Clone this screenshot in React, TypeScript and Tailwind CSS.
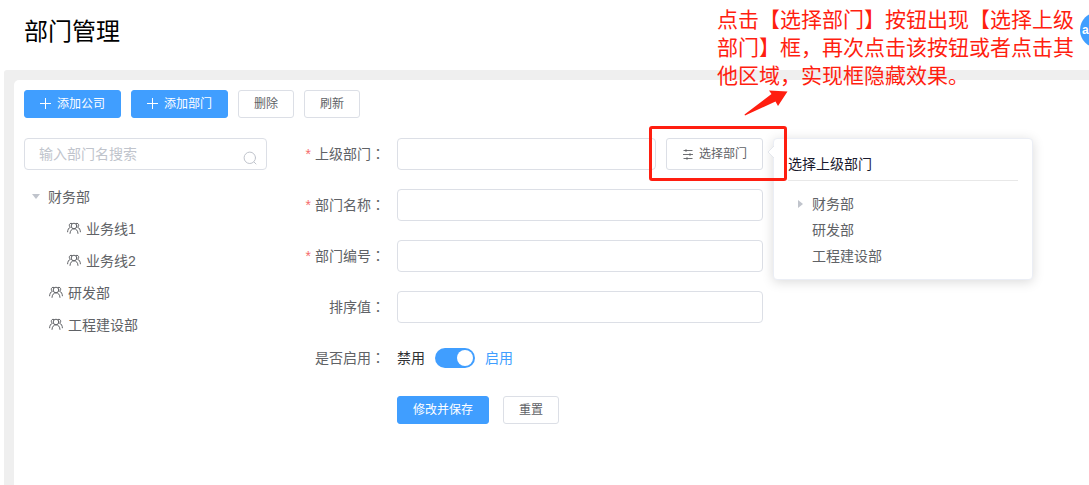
import { useEffect, useRef, useState } from "react";
import type { ButtonHTMLAttributes, ReactNode } from "react";

const groups = [
  { name: "财务部", children: ["业务线1", "业务线2"] },
  { name: "研发部", children: [] },
  { name: "工程建设部", children: [] },
];

const fields = [
  { id: "name", label: "部门名称", required: true },
  { id: "code", label: "部门编号", required: true },
  { id: "sort", label: "排序值", required: false },
];

const inputClass =
  "h-8 w-full min-w-0 rounded border border-[#dcdfe6] bg-white px-[14px] text-sm text-[#606266] outline-none placeholder:text-[#c0c4cc] focus:border-[#409eff]";

function PlusIcon() {
  return (
    <svg width="12" height="12" viewBox="0 0 12 12" fill="none" stroke="currentColor">
      <path d="M5.5 0v11M0 5.5h11" />
    </svg>
  );
}

function SearchIcon() {
  return (
    <svg width="14" height="14" viewBox="0 0 14 14" fill="none" stroke="currentColor" strokeLinecap="round">
      <circle cx="6.8" cy="6.8" r="5.7" />
      <path d="M11 11l2 2" />
    </svg>
  );
}

function OperationIcon() {
  return (
    <svg width="12" height="12" viewBox="0 0 12 12" fill="none" stroke="currentColor">
      <path d="M1.5 2.5h9M1 6.5h10M1.5 10.5h9" strokeWidth="0.9" />
      <path d="M4 1.5v2M8 5.5v2M5 9.5v2" strokeWidth="1.5" />
    </svg>
  );
}

function PeopleIcon() {
  return (
    <svg className="mb-[2px]" width="14" height="12" viewBox="0 0 14 12" fill="none" stroke="currentColor" strokeLinecap="round">
      <circle cx="7" cy="4" r="2.8" />
      <path d="M3 11.4c.1-2.7 1.7-4.6 4-4.6s3.9 1.9 4 4.6" />
      <path d="M4.8 1.4C3.3.9 2.300 1.900 2.300 3.300c0 1 .4 1.600 1.100 2C1.600 6 .7 7.500.6 9.800" />
      <path d="M9.200 1.400c1.500-.5 2.500.5 2.500 1.900 0 1-.4 1.600-1.100 2 1.800.7 2.700 2.200 2.800 4.500" />
    </svg>
  );
}

function Caret({ open }: { open: boolean }) {
  return (
    <svg width="12" height="12" viewBox="0 0 12 12" fill="#c0c4cc">
      <path d={open ? "M2 3h8L6 8z" : "M4 2v8l5-4z"} />
    </svg>
  );
}

type ButtonProps = ButtonHTMLAttributes<HTMLButtonElement> & {
  primary?: boolean;
  tall?: boolean;
  icon?: ReactNode;
};

function Button({ primary, tall, icon, children, ...rest }: ButtonProps) {
  const color = primary
    ? "border-[#409eff] bg-[#409eff] text-white"
    : "border-[#dcdfe6] bg-white text-[#606266]";
  return (
    <button
      type="button"
      className={`flex shrink-0 items-center gap-[5px] rounded-[3px] border px-[15px] text-xs ${tall ? "h-8" : "h-7"} ${color}`}
      {...rest}
    >
      {icon}
      <span>{children}</span>
    </button>
  );
}

function Label({ id, required, children }: { id: string; required?: boolean; children: ReactNode }) {
  return (
    <label htmlFor={id} className="h-8 w-[110px] shrink-0 pr-3 text-right text-sm leading-[30px] text-[#606266]">
      {required && <span className="mr-1 text-[#f56c6c]">*</span>}
      {children}
      <span className="font-['Noto_Sans_CJK_JP',sans-serif]">：</span>
    </label>
  );
}

function DepartmentTree() {
  const [open, setOpen] = useState(true);

  return (
    <ul className="mt-[11px] text-sm text-[#606266]">
      {groups.map((g) => (
        <li key={g.name}>
          {g.children.length > 0 ? (
            <button type="button" className="flex h-8 items-center gap-[6px] pl-[6px]" onClick={() => setOpen(!open)}>
              <Caret open={open} />
              {g.name}
            </button>
          ) : (
            <div className="flex h-8 items-center gap-[5px] pl-[25px]">
              <PeopleIcon />
              {g.name}
            </div>
          )}
          {open &&
            g.children.map((c) => (
              <div key={c} className="flex h-8 items-center gap-[5px] pl-[43px]">
                <PeopleIcon />
                {c}
              </div>
            ))}
        </li>
      ))}
    </ul>
  );
}

function ParentPicker({ onPick }: { onPick: (name: string) => void }) {
  const [visible, setVisible] = useState(true);
  const ref = useRef<HTMLDivElement>(null);

  // hide when clicking anywhere else
  useEffect(() => {
    function onDown(e: MouseEvent) {
      if (!ref.current?.contains(e.target as Node)) setVisible(false);
    }
    document.addEventListener("mousedown", onDown);
    return () => document.removeEventListener("mousedown", onDown);
  }, []);

  return (
    <div ref={ref} className="relative shrink-0">
      <Button tall icon={<OperationIcon />} onClick={() => setVisible(!visible)}>
        选择部门
      </Button>

      {visible && (
        <div className="absolute top-0 left-full ml-[10px] w-[260px] rounded border border-[#ebeef5] bg-white px-[14px] pt-[9px] pb-[10px] text-sm shadow-[0_2px_12px_0_rgba(0,0,0,0.15)]">
          <svg className="absolute top-[7px] -left-[7px]" width="7" height="12" viewBox="0 0 7 12">
            <path d="M7 0L1 6l6 6" fill="#fff" stroke="#e4e7ed" />
          </svg>
          <h2 className="border-b border-[#e8e8e8] leading-8 text-[#1a1a2e]">选择上级部门</h2>
          <ul className="mt-[10px] text-[#606266]">
            {groups.map((g) => (
              <li key={g.name}>
                <button
                  type="button"
                  className="flex h-[26px] items-center gap-[6px] pl-[6px]"
                  onClick={() => {
                    onPick(g.name);
                    setVisible(false);
                  }}
                >
                  <span className="w-3">{g.children.length > 0 && <Caret open={false} />}</span>
                  {g.name}
                </button>
              </li>
            ))}
          </ul>
        </div>
      )}

      <div className="pointer-events-none absolute -top-3 -right-6 -bottom-[11px] -left-[17px] rounded-[3px] border-3 border-[#ff1e10]" />
    </div>
  );
}

function Note() {
  return (
    <div className="pointer-events-none absolute top-[6px] right-[15px] w-[357px] text-[21px] leading-7 text-[#ff1e10]">
      <p>点击【选择部门】按钮出现【选择上级部门】框，再次点击该按钮或者点击其他区域，实现框隐藏效果。</p>
      <svg className="absolute top-[84px] left-[27px]" width="44" height="26" viewBox="0 0 44 26" fill="currentColor">
        <path d="M25 .5L43.5 1.500 34 16l-2.500-4.500L1 25.500.500 24.500 27.500 4z" />
      </svg>
    </div>
  );
}

export default function App() {
  const [parent, setParent] = useState("");
  const [enabled, setEnabled] = useState(true);

  return (
    <div className="relative flex min-h-screen flex-col overflow-hidden bg-white font-['Liberation_Sans','Noto_Sans_CJK_SC',sans-serif]">
      <header className="flex h-[70px] items-start justify-between pl-6">
        <h1 className="text-2xl leading-[64px] text-black">部门管理</h1>
        <div className="mt-3 -mr-[27px] flex size-9 items-center rounded-full bg-[#409eff] pl-[2px] text-xs font-bold text-white">
          a
        </div>
      </header>

      <div className="ml-1 flex grow flex-col rounded-tl-[3px] bg-[#efefef] pt-[10px] pl-[10px]">
        <main className="grow rounded-tl-[5px] bg-white p-[10px]">
          <div className="flex gap-[10px]">
            <Button primary icon={<PlusIcon />}>添加公司</Button>
            <Button primary icon={<PlusIcon />}>添加部门</Button>
            <Button>删除</Button>
            <Button>刷新</Button>
          </div>

          <div className="mt-5 flex gap-5">
            <aside className="w-[243px] shrink-0">
              <div className="relative">
                <input type="search" aria-label="搜索部门" placeholder="输入部门名搜索" className={inputClass} />
                <span className="absolute right-[10px] bottom-[5px] text-[#c0c4cc]">
                  <SearchIcon />
                </span>
              </div>
              <DepartmentTree />
            </aside>

            <form className="flex max-w-[476px] grow flex-col gap-[19px]" onSubmit={(e) => e.preventDefault()}>
              <div className="flex items-center">
                <Label id="parent" required>上级部门</Label>
                <div className="flex min-w-0 grow gap-[10px]">
                  <input id="parent" value={parent} onChange={(e) => setParent(e.target.value)} className={inputClass} />
                  <ParentPicker onPick={setParent} />
                </div>
              </div>

              {fields.map((f) => (
                <div key={f.id} className="flex items-center">
                  <Label id={f.id} required={f.required}>{f.label}</Label>
                  <input id={f.id} className={inputClass} />
                </div>
              ))}

              <div className="flex h-8 items-center">
                <Label id="enabled">是否启用</Label>
                <div className="flex items-center gap-[10px] text-sm">
                  <span className={enabled ? "text-[#303133]" : "text-[#409eff]"}>禁用</span>
                  <input
                    id="enabled"
                    type="checkbox"
                    role="switch"
                    checked={enabled}
                    onChange={(e) => setEnabled(e.target.checked)}
                    className="h-5 w-10 appearance-none rounded-full bg-[#dcdfe6] p-[2px] before:block before:size-4 before:rounded-full before:bg-white checked:bg-[#409eff] checked:before:ml-5"
                  />
                  <span className={enabled ? "text-[#409eff]" : "text-[#303133]"}>启用</span>
                </div>
              </div>

              <div className="flex gap-[14px] pt-[3px] pl-[110px]">
                <Button primary type="submit">修改并保存</Button>
                <Button onClick={() => setParent("")}>重置</Button>
              </div>
            </form>
          </div>
        </main>
      </div>

      <Note />
    </div>
  );
}
